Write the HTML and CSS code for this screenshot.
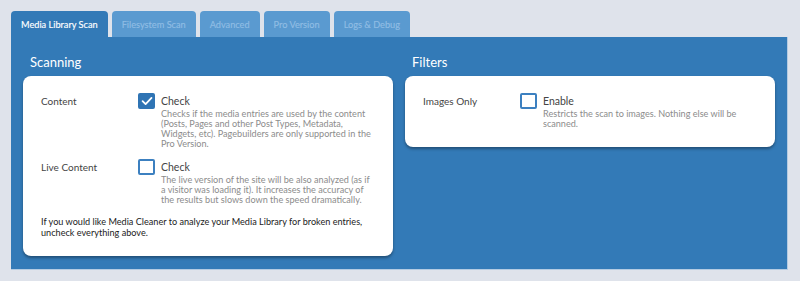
FILE: index.html
```html
<!DOCTYPE html>
<html lang="en">
<head>
<meta charset="utf-8">
<title>Media Cleaner Settings</title>
<link rel="stylesheet" href="styles.css">
</head>
<body>
<div class="page">
  <nav class="tabs">
    <div class="tab active">Media Library Scan</div>
    <div class="tab">Filesystem Scan</div>
    <div class="tab">Advanced</div>
    <div class="tab">Pro Version</div>
    <div class="tab">Logs &amp; Debug</div>
  </nav>
  <div class="panel">
    <section class="column">
      <h2 class="col-title">Scanning</h2>
      <div class="card">
        <div class="row">
          <div class="label">Content</div>
          <div class="field">
            <div class="opt">
              <span class="box checked"><svg viewBox="0 0 16 16" width="16" height="16"><path d="M3.6 8.2 L6.6 11.1 L12.5 4.9" fill="none" stroke="#fff" stroke-width="1.8" stroke-linecap="round" stroke-linejoin="round"/></svg></span>
              <span class="opt-text">Check</span>
            </div>
            <p class="desc">Checks if the media entries are used by the content (Posts, Pages and other Post Types, Metadata, Widgets, etc). Pagebuilders are only supported in the Pro Version.</p>
          </div>
        </div>
        <div class="row">
          <div class="label">Live Content</div>
          <div class="field">
            <div class="opt">
              <span class="box"></span>
              <span class="opt-text">Check</span>
            </div>
            <p class="desc">The live version of the site will be also analyzed (as if a visitor was loading it). It increases the accuracy of the results but slows down the speed dramatically.</p>
          </div>
        </div>
        <p class="note">If you would like Media Cleaner to analyze your Media Library for broken entries, uncheck everything above.</p>
      </div>
    </section>
    <section class="column">
      <h2 class="col-title">Filters</h2>
      <div class="card">
        <div class="row">
          <div class="label">Images Only</div>
          <div class="field">
            <div class="opt">
              <span class="box"></span>
              <span class="opt-text">Enable</span>
            </div>
            <p class="desc">Restricts the scan to images. Nothing else will be scanned.</p>
          </div>
        </div>
      </div>
    </section>
  </div>
</div>
</body>
</html>
```
FILE: styles.css
```css
* { box-sizing: border-box; }
html, body { margin: 0; padding: 0; }
body {
  background: #dfe3eb;
  font-family: Lato, "Noto Sans", sans-serif;
  color: #3c434a;
}
.page { padding: 11px 12px 12px 11px; }
.tabs {
  display: flex;
  gap: 4px;
  height: 26px;
}
.tab {
  height: 26px;
  padding: 1px 10px 0;
  display: flex;
  align-items: center;
  font-size: 9.2px;
  color: #90bde4;
  background: #5a9ad0;
  border-radius: 4px 4px 0 0;
  -webkit-text-stroke: 0.15px currentColor;
}
.tab.active {
  background: #337ab7;
  color: #fff;
}
.panel {
  width: 777px;
  height: 233px;
  background: #337ab7;
  border-right: 1px solid #b4cbe2;
  border-bottom: 1px solid #b4cbe2;
  padding: 0 12px;
  display: grid;
  grid-template-columns: 370px 370px;
  column-gap: 12px;
  align-items: start;
}
.col-title {
  margin: 0;
  height: 39px;
  padding-top: 18px;
  font-size: 13px;
  line-height: 15px;
  font-weight: 400;
  color: #fff;
  padding-left: 7px;
}
.card {
  background: #fff;
  border-radius: 8px;
  box-shadow: 0 2px 3px rgba(0, 0, 0, 0.35);
  padding: 17px 18px 18px;
}
.row {
  display: flex;
  margin-bottom: 10px;
}
.row:last-child { margin-bottom: 0; }
.label {
  width: 97px;
  flex: none;
  font-size: 10px;
  line-height: 16px;
  color: #444;
}
.field { flex: 1; }
.opt {
  display: flex;
  align-items: center;
  height: 16px;
  gap: 6px;
}
.box {
  width: 17px;
  height: 16px;
  border: 2px solid #3c80c0;
  border-radius: 2px;
  background: #fff;
  display: flex;
  align-items: center;
  justify-content: center;
}
.box.checked {
  background: #2f74b4;
  border-color: #2f74b4;
}
.box svg { display: block; flex: none; }
.opt-text {
  font-size: 10.5px;
  color: #444;
}
.desc {
  margin: 0;
  padding-left: 23px;
  font-size: 9.1px;
  line-height: 10px;
  color: #8c8c8c;
  max-width: 236px;
}
.note {
  margin: 12px 0 0;
  font-size: 9.15px;
  line-height: 10.5px;
  color: #222;
}
```
